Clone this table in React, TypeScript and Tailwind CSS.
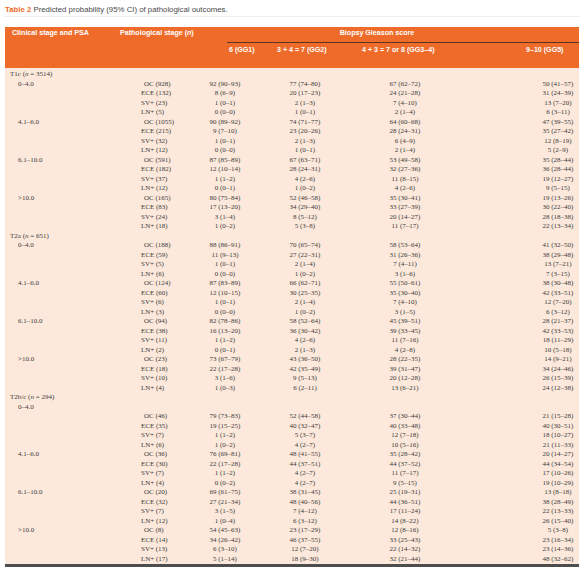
import React from "react";

type Row = { psa?: string; stage?: string; vals?: string[]; group?: string };

const T1c: [string, string[]][] = [
  ["0–4.0", ["OC (928)|92 (90–93)|77 (74–80)|67 (62–72)|50 (41–57)", "ECE (132)|8 (6–9)|20 (17–23)|24 (21–28)|31 (24–39)", "SV+ (23)|1 (0–1)|2 (1–3)|7 (4–10)|13 (7–20)", "LN+ (5)|0 (0–0)|1 (0–1)|2 (1–4)|6 (3–11)"]],
  ["4.1–6.0", ["OC (1055)|90 (89–92)|74 (71–77)|64 (60–68)|47 (39–55)", "ECE (215)|9 (7–10)|23 (20–26)|28 (24–31)|35 (27–42)", "SV+ (32)|1 (0–1)|2 (1–3)|6 (4–9)|12 (8–19)", "LN+ (12)|0 (0–0)|1 (0–1)|2 (1–4)|5 (2–9)"]],
  ["6.1–10.0", ["OC (591)|87 (85–89)|67 (63–71)|53 (49–58)|35 (28–44)", "ECE (182)|12 (10–14)|28 (24–31)|32 (27–36)|36 (28–44)", "SV+ (37)|1 (1–2)|4 (2–6)|11 (8–15)|19 (12–27)", "LN+ (12)|0 (0–1)|1 (0–2)|4 (2–6)|9 (5–15)"]],
  [">10.0", ["OC (165)|80 (75–84)|52 (46–58)|35 (30–41)|19 (13–26)", "ECE (83)|17 (13–20)|34 (29–40)|33 (27–39)|30 (22–40)", "SV+ (24)|3 (1–4)|8 (5–12)|20 (14–27)|28 (18–38)", "LN+ (18)|1 (0–2)|5 (3–8)|11 (7–17)|22 (13–34)"]],
];

const T2a: [string, string[]][] = [
  ["0–4.0", ["OC (188)|88 (86–91)|70 (65–74)|58 (53–64)|41 (32–50)", "ECE (59)|11 (9–13)|27 (22–31)|31 (26–36)|38 (29–48)", "SV+ (5)|1 (0–1)|2 (1–4)|7 (4–11)|13 (7–21)", "LN+ (6)|0 (0–0)|1 (0–2)|3 (1–6)|7 (3–15)"]],
  ["4.1–6.0", ["OC (124)|87 (83–89)|66 (62–71)|55 (50–61)|38 (30–48)", "ECE (60)|12 (10–15)|30 (25–35)|35 (30–40)|42 (33–51)", "SV+ (6)|1 (0–1)|2 (1–4)|7 (4–10)|12 (7–20)", "LN+ (3)|0 (0–0)|1 (0–2)|3 (1–5)|6 (3–12)"]],
  ["6.1–10.0", ["OC (94)|82 (78–86)|58 (52–64)|45 (39–51)|28 (21–37)", "ECE (38)|16 (13–20)|36 (30–42)|39 (33–45)|42 (33–53)", "SV+ (11)|1 (1–2)|4 (2–6)|11 (7–16)|18 (11–29)", "LN+ (2)|0 (0–1)|2 (1–3)|4 (2–8)|10 (5–18)"]],
  [">10.0", ["OC (23)|73 (67–79)|43 (36–50)|28 (22–35)|14 (9–21)", "ECE (18)|22 (17–28)|42 (35–49)|39 (31–47)|34 (24–46)", "SV+ (10)|3 (1–6)|9 (5–13)|20 (12–28)|26 (15–39)", "LN+ (4)|1 (0–3)|6 (2–11)|13 (6–21)|24 (12–38)"]],
];

const T2bc: [string, string[]][] = [
  ["0–4.0", ["OC (46)|79 (73–83)|52 (44–58)|37 (30–44)|21 (15–28)", "ECE (35)|19 (15–25)|40 (32–47)|40 (33–48)|40 (30–51)", "SV+ (7)|1 (1–2)|5 (3–7)|12 (7–18)|18 (10–27)", "LN+ (6)|1 (0–2)|4 (2–7)|10 (5–16)|21 (11–33)"]],
  ["4.1–6.0", ["OC (36)|76 (69–81)|48 (41–55)|35 (28–42)|20 (14–27)", "ECE (30)|22 (17–28)|44 (37–51)|44 (37–52)|44 (34–54)", "SV+ (7)|1 (1–2)|4 (2–7)|11 (7–17)|17 (10–26)", "LN+ (4)|0 (0–2)|4 (2–7)|9 (5–15)|19 (10–29)"]],
  ["6.1–10.0", ["OC (20)|69 (61–75)|38 (31–45)|25 (19–31)|13 (8–18)", "ECE (32)|27 (21–34)|48 (40–56)|44 (36–51)|38 (28–49)", "SV+ (7)|3 (1–5)|7 (4–12)|17 (11–24)|22 (13–33)", "LN+ (12)|1 (0–4)|6 (3–12)|14 (8–22)|26 (15–40)"]],
  [">10.0", ["OC (8)|54 (45–63)|23 (17–29)|12 (8–16)|5 (3–8)", "ECE (14)|34 (26–42)|46 (37–55)|33 (25–43)|23 (16–34)", "SV+ (13)|6 (3–10)|12 (7–20)|22 (14–32)|23 (14–36)", "LN+ (17)|5 (1–14)|18 (9–30)|32 (21–44)|48 (32–62)"]],
];

// flatten groups into table rows
const build = (name: string, n: string, blocks: [string, string[]][], splitFirst = false): Row[] => {
  const out: Row[] = [{ group: `${name}|${n}` }];
  blocks.forEach(([psa, lines], bi) => {
    const split = splitFirst && bi === 0;
    if (split) out.push({ psa });
    lines.forEach((l, i) => {
      const [stage, ...vals] = l.split("|");
      out.push({ psa: i === 0 && !split ? psa : undefined, stage, vals });
    });
  });
  return out;
};

const rows: Row[] = [
  ...build("T1c", "3514", T1c),
  ...build("T2a", "651", T2a),
  ...build("T2b/c", "294", T2bc, true),
];

const grid = "grid grid-cols-[113px_67px_80px_80px_120px_114px]";

export default function App() {
  return (
    <div className="w-[581px] h-[572px] bg-white pl-[5px] pr-[2px] pt-[6px] overflow-hidden">
      {/* caption */}
      <div className="h-[8px] leading-[8px] text-[7.8px] whitespace-nowrap text-[#4a4a4a]" style={{ fontFamily: '"Liberation Sans", Arial, sans-serif' }}>
        <span className="font-bold text-[#ef6b2a]">Table 2</span> Predicted probability (95% CI) of pathological outcomes.
      </div>
      <div className="mt-[2px] border-b border-[#ececec]" />

      <div className="mt-[10px]">
        {/* header */}
        <div className="bg-[#ef6b2a] h-[41px] text-white font-bold text-[7.1px] leading-[7px] whitespace-nowrap" style={{ fontFamily: '"Liberation Sans", Arial, sans-serif' }}>
          <div className="grid grid-cols-[113px_67px_1fr] h-[15.7px]">
            <div className="pl-[7px] pt-[2.5px]">Clinical stage and PSA</div>
            <div className="pl-[2px] pt-[2.5px]">
              Pathological stage (<span className="italic">n</span>)
            </div>
            <div className="ml-[42px] pr-[52px] pt-[2.5px] text-center border-b border-[#5b3522]">Biopsy Gleason score</div>
          </div>
          <div className={`${grid} pt-[4.5px]`}>
            <div />
            <div />
            <div className="pl-[44px]">6 (GG1)</div>
            <div className="pl-[12px]">3 + 4 = 7 (GG2)</div>
            <div className="pl-[17px]">4 + 3 = 7 or 8 (GG3–4)</div>
            <div className="pl-[61px]">9–10 (GG5)</div>
          </div>
        </div>

        {/* body */}
        <div className="bg-[#fde9dc] pt-[2px] border-b-[3px] border-[#4d4d4d] text-[#3b3b3b] text-[7px] leading-[9.5px] whitespace-nowrap" style={{ fontFamily: '"Liberation Serif", "Times New Roman", serif' }}>
          {rows.map((r, i) => {
            if (r.group) {
              const [name, n] = r.group.split("|");
              return (
                <div key={i} className="h-[9.5px] pl-[5px]">
                  {name} (<span className="italic">n</span> = {n})
                </div>
              );
            }
            return (
              <div key={i} className={`${grid} h-[9.5px]`}>
                <div className="pl-[13px]">{r.psa ?? ""}</div>
                <div className={r.stage?.startsWith("OC") ? "pl-[26px]" : "pl-[23px]"}>{r.stage ?? ""}</div>
                {r.vals ? (
                  <>
                    <div className="flex justify-center">{r.vals[0]}</div>
                    <div className="flex justify-center">{r.vals[1]}</div>
                    <div className="flex justify-center">{r.vals[2]}</div>
                    <div className="flex justify-center pl-[72px]">{r.vals[3]}</div>
                  </>
                ) : (
                  <>
                    <div />
                    <div />
                    <div />
                    <div />
                  </>
                )}
              </div>
            );
          })}
        </div>
      </div>
    </div>
  );
}
